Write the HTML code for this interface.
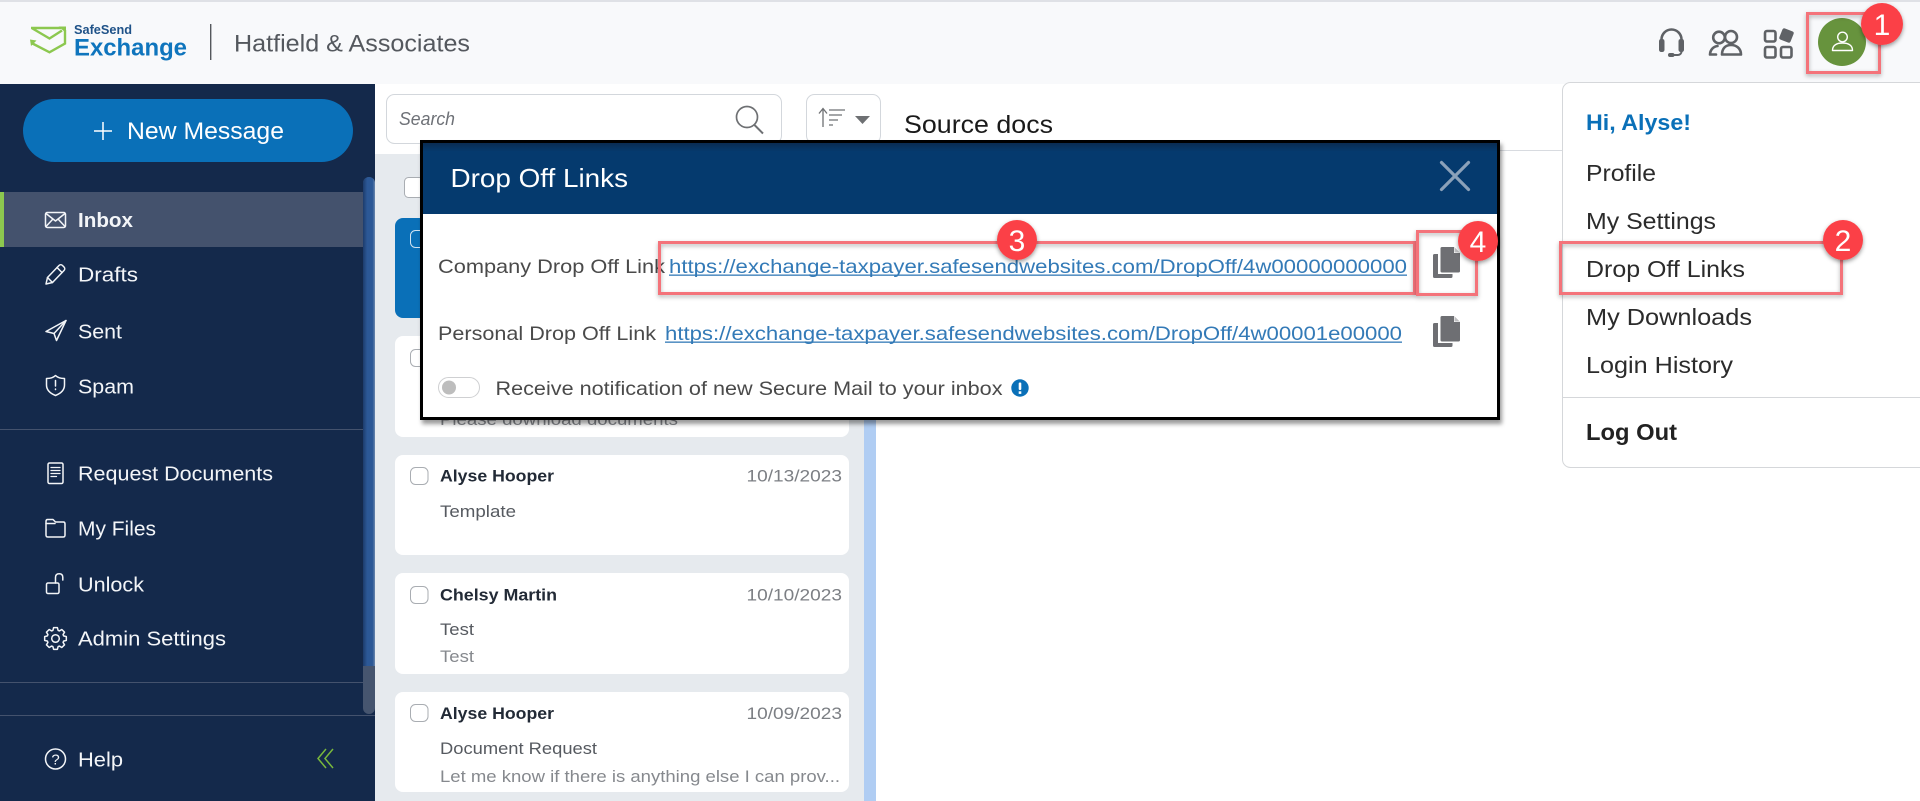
<!DOCTYPE html>
<html lang="en">
<head>
<meta charset="utf-8">
<title>SafeSend Exchange - Drop Off Links</title>
<style>
html,body{margin:0;padding:0;width:1920px;height:801px;overflow:hidden;background:#fff}
svg{display:block;position:absolute;left:0;top:0}
text{font-family:"Liberation Sans",Arial,sans-serif}
.nav{font-size:20px;fill:#f3f5f8}
.menu{font-size:23px;fill:#2b2b2b}
.name{font-size:16.5px;font-weight:bold;fill:#222a36}
.date{font-size:17px;fill:#7c7f84}
.subj{font-size:17px;fill:#565a60}
.prev{font-size:17px;fill:#86898e}
.lbl{font-size:19.5px;fill:#4a4a4a}
.lnk{font-size:19.5px;fill:#337ab7}
.num{font-size:30px;fill:#fff;text-anchor:middle}
.ic{fill:none;stroke:#f3f5f8;stroke-width:1.5;stroke-linejoin:round;stroke-linecap:round}
.hic{fill:none;stroke:#5f6266;stroke-width:2.6;stroke-linejoin:round;stroke-linecap:round}
.red{fill:none;stroke:#f4737a;stroke-width:3;filter:url(#rs)}
</style>
</head>
<body>
<svg width="1920" height="801" viewBox="0 0 1920 801" xmlns="http://www.w3.org/2000/svg">
<defs>
<filter id="rs" x="-10%" y="-30%" width="120%" height="160%"><feDropShadow dx="0" dy="2" stdDeviation="2" flood-color="#000" flood-opacity=".3"/></filter>
<filter id="bs" x="-30%" y="-30%" width="160%" height="160%"><feDropShadow dx="0" dy="2" stdDeviation="2" flood-color="#000" flood-opacity=".4"/></filter>
<filter id="ms" x="-5%" y="-5%" width="110%" height="115%"><feDropShadow dx="2" dy="4" stdDeviation="2" flood-color="#000" flood-opacity=".4"/></filter>
<linearGradient id="mh" x1="0" y1="0" x2="0" y2="1"><stop offset="0" stop-color="#0a2c52"/><stop offset=".12" stop-color="#053a6e"/><stop offset="1" stop-color="#053a6e"/></linearGradient>
<linearGradient id="sb" x1="0" y1="0" x2="1" y2="0"><stop offset="0" stop-color="#1d3c6c"/><stop offset=".35" stop-color="#2c5896"/><stop offset=".8" stop-color="#2c5896"/><stop offset="1" stop-color="#6c88ad"/></linearGradient>
<g id="copy"><path fill="#6e6f73" d="M9 0H21L27 6V24a1.5 1.5 0 0 1-1.5 1.5H9a1.5 1.5 0 0 1-1.5-1.5V1.5A1.5 1.5 0 0 1 9 0Z"/><path fill="#fff" d="M21 0L27 6H21Z"/><path fill="#6e6f73" d="M21.5 0.5L26.5 5.5H21.5Z" opacity=".45"/><path fill="#6e6f73" d="M0 8.5A1.5 1.5 0 0 1 1.5 7H5V27H19.5V29.5A1.5 1.5 0 0 1 18 31H1.5A1.5 1.5 0 0 1 0 29.5Z"/></g>
</defs>

<!-- page backgrounds -->
<rect width="1920" height="801" fill="#fff"/>
<rect width="1920" height="84" fill="#f8f9fb"/>
<rect width="1920" height="2" fill="#dfe1e6"/>

<!-- logo -->
<g fill="none" stroke="#8cc84f" stroke-width="2.4" stroke-linejoin="miter">
<path d="M31 28H61M32.500 28.500L49.500 38.500L62 30.500"/>
<path d="M32.500 43.500L49.500 52.300L65 43.500V30"/>
</g>
<path fill="#8cc84f" d="M66 26.500L58.500 26.500L66 33Z M30 39.500L36.500 40.500L31 46Z"/>
<text x="74" y="34" font-size="13" font-weight="bold" fill="#1f5288" textLength="58" lengthAdjust="spacingAndGlyphs">SafeSend</text>
<text x="74" y="55.500" font-size="24" font-weight="bold" fill="#0f75bd" textLength="113" lengthAdjust="spacingAndGlyphs">Exchange</text>
<rect x="210" y="24" width="1.4" height="36" fill="#55585c"/>
<text x="234" y="51.500" font-size="24.5" fill="#54585e" textLength="236" lengthAdjust="spacingAndGlyphs">Hatfield &amp; Associates</text>

<!-- header icons -->
<g class="hic" stroke-width="2.800">
<path d="M1661.500 42V39.500a10 10 0 0 1 20 0V42"/>
<path d="M1681.500 50v1.500a3.500 3.500 0 0 1-3.500 3.500H1672" stroke-width="2"/>
</g>
<rect x="1659" y="39" width="5.500" height="13" rx="2.200" fill="#5f6266"/>
<rect x="1678.500" y="39" width="5.500" height="13" rx="2.200" fill="#5f6266"/>
<rect x="1668" y="53" width="6.500" height="4" rx="2" fill="#5f6266"/>
<g class="hic" stroke-width="2.300">
<circle cx="1719" cy="37.500" r="5.800"/>
<circle cx="1731" cy="37" r="6"/>
<path d="M1722 54.500c0-6 3.500-9.500 9-9.500s10 3.500 10 9.500Z"/>
<path d="M1717.500 46c-4 .6-7.300 3.600-7.500 8.500h6"/>
</g>
<g class="hic" stroke-width="2.400">
<rect x="1765" y="31" width="10.500" height="10.500" rx="2"/>
<rect x="1765" y="47" width="10.500" height="10.500" rx="2"/>
<rect x="1781" y="47" width="10.500" height="10.500" rx="2"/>
</g>
<rect x="1780.500" y="29.500" width="12" height="12" rx="2" fill="#5f6266" transform="rotate(22 1786.500 35.500)"/>
<circle cx="1842" cy="42" r="24" fill="#67933d"/>
<g fill="none" stroke="#fff" stroke-width="1.400">
<circle cx="1842.500" cy="37" r="4.800"/>
<path d="M1832.500 50.500c0-5 4-7.500 10-7.500s10 2.500 10 7.500Z" stroke-linejoin="round"/>
</g>

<!-- sidebar -->
<rect x="0" y="84" width="375" height="717" fill="#14294b"/>
<rect x="23" y="99" width="330" height="63" rx="31.500" fill="#0a70b8"/>
<path d="M94 131H112M103 122V140" stroke="#fff" stroke-width="1.500" fill="none"/>
<text x="127" y="139" font-size="24.5" fill="#fff" textLength="157" lengthAdjust="spacingAndGlyphs">New Message</text>

<rect x="0" y="192" width="363" height="55" fill="#44526d"/>
<rect x="0" y="192" width="4" height="55" fill="#8cc84f"/>
<rect x="363" y="177" width="12" height="537" rx="6" fill="#46556f"/>
<path d="M363 183a6 6 0 0 1 12 0V666H363Z" fill="url(#sb)"/>

<!-- nav icons -->
<g class="ic">
<rect x="45.500" y="212.500" width="20" height="15" rx="1.800"/>
<path d="M46 213.500L55.500 221L65 213.500M46 226.500L52.500 219.500M65 226.500L58.500 219.500"/>
<path d="M46 284L47.500 277.500L59 265.500C60 264.500 61.500 264.500 62.500 265.500L64 267C65 268 65 269.500 64 270.500L52.500 282.500Z"/>
<path d="M57 267.500L62 272.500M47.500 277.500L52.500 282.500"/>
<path d="M66 320.500L46 331.500L54 333.500L56.500 340.500Z"/>
<path d="M54 333.500L66 320.500"/>
<path d="M55.500 375.500C58 378 61 378.500 64.500 378.500V385C64.500 390 60.500 393.500 55.500 395.500C50.500 393.500 46.500 390 46.500 385V378.500C50 378.500 53 378 55.500 375.500Z"/>
<path d="M55.500 380.500V386"/>
<path d="M55.500 389V389.500"/>
<rect x="48" y="463" width="15" height="20.500" rx="1.500"/>
<path d="M51 467.500H60M51 470.500H60M51 473.500H60M51 476.500H56.500" stroke-width="1.300"/>
<path d="M46 535V521.500C46 520.500 46.500 519.500 47.500 519.500H53L55.500 522H63.500C64.500 522 65 523 65 524V535C65 536.500 64.500 537 63 537H48C46.500 537 46 536.500 46 535Z"/>
<path d="M46 523.500H55"/>
<rect x="46.500" y="583" width="12.500" height="10.500" rx="1.500"/>
<path d="M55.500 583V577.500C55.500 575 57 573.800 59.200 573.800S62.800 575 62.800 577.500V580"/>
<path transform="translate(55.500 638.500)" d="M8.08-2.63L10.83-1.91L10.83 1.91L8.08 2.63L7.57 3.86L9.01 6.31L6.31 9.01L3.86 7.57L2.63 8.08L1.91 10.83L-1.91 10.83L-2.63 8.08L-3.86 7.57L-6.31 9.01L-9.01 6.31L-7.57 3.86L-8.08 2.63L-10.83 1.91L-10.83-1.91L-8.08-2.63L-7.57-3.86L-9.01-6.31L-6.31-9.01L-3.86-7.57L-2.63-8.08L-1.91-10.83L1.91-10.83L2.63-8.08L3.86-7.57L6.31-9.01L9.01-6.31L7.57-3.86Z"/>
<circle cx="55.500" cy="638.500" r="3.800"/>
<circle cx="55.500" cy="759" r="10"/>
</g>
<text x="55.500" y="764.500" font-size="15" fill="#f3f5f8" text-anchor="middle">?</text>

<text class="nav" x="78" y="227" font-weight="bold" textLength="55" lengthAdjust="spacingAndGlyphs">Inbox</text>
<text class="nav" x="78" y="281.500" textLength="60" lengthAdjust="spacingAndGlyphs">Drafts</text>
<text class="nav" x="78" y="338.500" textLength="44" lengthAdjust="spacingAndGlyphs">Sent</text>
<text class="nav" x="78" y="393.500" textLength="56" lengthAdjust="spacingAndGlyphs">Spam</text>
<rect x="0" y="429" width="363" height="1" fill="#44526d"/>
<text class="nav" x="78" y="480.500" textLength="195" lengthAdjust="spacingAndGlyphs">Request Documents</text>
<text class="nav" x="78" y="535.500" textLength="78" lengthAdjust="spacingAndGlyphs">My Files</text>
<text class="nav" x="78" y="591.500" textLength="66" lengthAdjust="spacingAndGlyphs">Unlock</text>
<text class="nav" x="78" y="645.500" textLength="148" lengthAdjust="spacingAndGlyphs">Admin Settings</text>
<rect x="0" y="682" width="363" height="1" fill="#44526d"/>
<rect x="0" y="715" width="375" height="1" fill="#44526d"/>
<text class="nav" x="78" y="766.500" textLength="45" lengthAdjust="spacingAndGlyphs">Help</text>
<path d="M326 749L318 758.500L326 768M333 749L325 758.500L333 768" fill="none" stroke="#79b83c" stroke-width="1.500"/>

<!-- list panel -->
<rect x="375" y="154" width="489" height="647" fill="#e6eaee"/>
<rect x="864" y="154" width="12" height="647" fill="#b0cdf3"/>
<rect x="404.500" y="177.500" width="19" height="20" rx="4" fill="#fff" stroke="#a9adb2"/>

<rect x="386.500" y="94.500" width="395" height="49" rx="8" fill="#fff" stroke="#d3d7dc"/>
<text x="399" y="125" font-size="18" font-style="italic" fill="#6e7177" textLength="56" lengthAdjust="spacingAndGlyphs">Search</text>
<circle cx="747" cy="117" r="10.500" fill="none" stroke="#6e7073" stroke-width="1.700"/>
<path d="M754.500 125L763 133.500" stroke="#6e7073" stroke-width="2" fill="none"/>
<rect x="806.500" y="94.500" width="74" height="49" rx="8" fill="#fff" stroke="#d3d7dc"/>
<path d="M823 127V109M819 113.500L823 108.500L827 113.500" fill="none" stroke="#6e7073" stroke-width="1.300"/>
<path d="M829 110H845M829 115H842M829 120H838M829 125H833" fill="none" stroke="#6e7073" stroke-width="1.300"/>
<path d="M855 116H870L862.500 124Z" fill="#6e7073"/>

<text x="904" y="133" font-size="25" fill="#1a1a1a" textLength="149" lengthAdjust="spacingAndGlyphs">Source docs</text>
<rect x="876" y="150" width="686" height="1" fill="#d8dbe0"/>

<!-- cards -->
<rect x="395" y="218" width="454" height="100" rx="8" fill="#0a70b8"/>
<rect x="410.500" y="230.500" width="18" height="17" rx="5" fill="none" stroke="#cfe2f1"/>
<rect x="395" y="336" width="454" height="101" rx="8" fill="#fff"/>
<rect x="410.500" y="349.500" width="18" height="17" rx="5" fill="#fff" stroke="#a9adb2"/>
<text class="prev" x="440" y="425" textLength="238" lengthAdjust="spacingAndGlyphs">Please download documents</text>

<rect x="395" y="455" width="454" height="100" rx="8" fill="#fff"/>
<rect x="410.500" y="467.500" width="17.500" height="17" rx="5" fill="#fff" stroke="#a9adb2"/>
<text class="name" x="440" y="481.500" textLength="114" lengthAdjust="spacingAndGlyphs">Alyse Hooper</text>
<text class="date" x="746.500" y="481.500" textLength="95.500" lengthAdjust="spacingAndGlyphs">10/13/2023</text>
<text class="subj" x="440" y="517" textLength="76" lengthAdjust="spacingAndGlyphs">Template</text>

<rect x="395" y="573" width="454" height="101" rx="8" fill="#fff"/>
<rect x="410.500" y="586.500" width="17.500" height="17" rx="5" fill="#fff" stroke="#a9adb2"/>
<text class="name" x="440" y="600.500" textLength="117" lengthAdjust="spacingAndGlyphs">Chelsy Martin</text>
<text class="date" x="746.500" y="600.500" textLength="95.500" lengthAdjust="spacingAndGlyphs">10/10/2023</text>
<text class="subj" x="440" y="635" textLength="34" lengthAdjust="spacingAndGlyphs">Test</text>
<text class="prev" x="440" y="662" textLength="34" lengthAdjust="spacingAndGlyphs">Test</text>

<rect x="395" y="692" width="454" height="100" rx="8" fill="#fff"/>
<rect x="410.500" y="704.500" width="17.500" height="17" rx="5" fill="#fff" stroke="#a9adb2"/>
<text class="name" x="440" y="719" textLength="114" lengthAdjust="spacingAndGlyphs">Alyse Hooper</text>
<text class="date" x="746.500" y="719" textLength="95.500" lengthAdjust="spacingAndGlyphs">10/09/2023</text>
<text class="subj" x="440" y="754" textLength="157" lengthAdjust="spacingAndGlyphs">Document Request</text>
<text class="prev" x="440" y="782" textLength="400" lengthAdjust="spacingAndGlyphs">Let me know if there is anything else I can prov...</text>

<!-- user menu -->
<rect x="1562.500" y="82.500" width="380" height="385" rx="8" fill="#fff" stroke="#d5d7da"/>
<text x="1586" y="130" font-size="22" font-weight="bold" fill="#0a70b8" textLength="105" lengthAdjust="spacingAndGlyphs">Hi, Alyse!</text>
<text class="menu" x="1586" y="181" textLength="70" lengthAdjust="spacingAndGlyphs">Profile</text>
<text class="menu" x="1586" y="229" textLength="130" lengthAdjust="spacingAndGlyphs">My Settings</text>
<text class="menu" x="1586" y="277" textLength="159" lengthAdjust="spacingAndGlyphs">Drop Off Links</text>
<text class="menu" x="1586" y="325" textLength="166" lengthAdjust="spacingAndGlyphs">My Downloads</text>
<text class="menu" x="1586" y="373" textLength="147" lengthAdjust="spacingAndGlyphs">Login History</text>
<rect x="1563" y="397" width="357" height="1" fill="#d5d7da"/>
<text class="menu" x="1586" y="440" font-weight="bold" style="fill:#222" textLength="91" lengthAdjust="spacingAndGlyphs">Log Out</text>

<!-- modal -->
<rect x="421.500" y="141.500" width="1077" height="277" fill="#fff" stroke="#000" stroke-width="3" filter="url(#ms)"/>
<rect x="423" y="143" width="1074" height="71" fill="url(#mh)"/>
<text x="450.500" y="187" font-size="26" fill="#fff" textLength="177.500" lengthAdjust="spacingAndGlyphs">Drop Off Links</text>
<path d="M1441.500 162.500L1468.500 189.500M1468.500 162.500L1441.500 189.500" stroke="#8ba1b9" stroke-width="3.200" stroke-linecap="round" fill="none"/>

<text class="lbl" x="438" y="273" textLength="227" lengthAdjust="spacingAndGlyphs">Company Drop Off Link</text>
<text class="lnk" x="669" y="273" textLength="738" lengthAdjust="spacingAndGlyphs">https://exchange-taxpayer.safesendwebsites.com/DropOff/4w00000000000</text>
<rect x="669" y="274.500" width="738" height="1.300" fill="#337ab7"/>
<text class="lbl" x="438" y="340" textLength="218" lengthAdjust="spacingAndGlyphs">Personal Drop Off Link</text>
<text class="lnk" x="665" y="340" textLength="737" lengthAdjust="spacingAndGlyphs">https://exchange-taxpayer.safesendwebsites.com/DropOff/4w00001e00000</text>
<rect x="665" y="341.500" width="737" height="1.300" fill="#337ab7"/>
<use href="#copy" x="1433" y="247"/>
<use href="#copy" x="1433" y="316"/>
<rect x="438.500" y="377.500" width="41" height="20" rx="10" fill="#fff" stroke="#cfd0d2"/>
<circle cx="449" cy="387.500" r="7" fill="#bdbdbd"/>
<text class="lbl" x="495.500" y="395" textLength="507" lengthAdjust="spacingAndGlyphs">Receive notification of new Secure Mail to your inbox</text>
<circle cx="1020" cy="388" r="8.700" fill="#0a70b8"/>
<rect x="1018.700" y="382.500" width="2.600" height="7.500" rx="1" fill="#fff"/>
<rect x="1018.700" y="391.300" width="2.600" height="2.600" fill="#fff"/>

<!-- annotations -->
<rect class="red" x="1807.500" y="13.500" width="72" height="59"/>
<rect class="red" x="1560.500" y="242.500" width="281" height="51"/>
<rect class="red" x="659.500" y="242.500" width="755" height="51"/>
<rect class="red" x="1417.500" y="231.500" width="59" height="63"/>

<g filter="url(#bs)">
<circle cx="1882" cy="24" r="21" fill="#fb4146"/>
<circle cx="1843" cy="240" r="20" fill="#fb4146"/>
<circle cx="1017" cy="240" r="20" fill="#fb4146"/>
<circle cx="1478" cy="241" r="20" fill="#fb4146"/>
</g>
<text class="num" x="1882" y="35">1</text>
<text class="num" x="1843" y="251">2</text>
<text class="num" x="1017" y="251">3</text>
<text class="num" x="1478" y="252">4</text>
</svg>
</body>
</html>
